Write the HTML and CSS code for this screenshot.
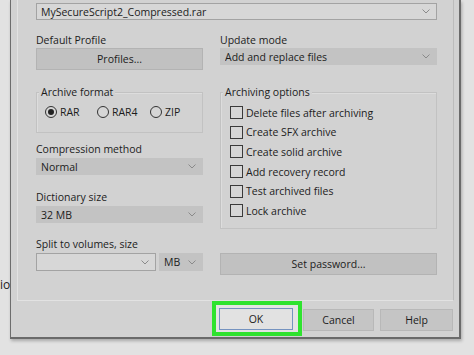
FILE: index.html
```html
<!DOCTYPE html>
<html>
<head>
<meta charset="utf-8">
<link rel="stylesheet" href="styles.css">
</head>
<body>
<div class="desk">
  <div class="bgtext">ios</div>
  <div class="dialog">
    <div class="page">
      <div class="combo wide plain">
        <span class="val">MySecureScript2_Compressed.rar</span>
        <svg class="chev" viewBox="0 0 8 5"><path d="M0.5 0.5 L4 4 L7.5 0.5"/></svg>
      </div>
      <div class="cols">
        <div class="col left">
          <div class="label first">Default Profile</div>
          <div class="btn profiles">Profiles...</div>
          <div class="group fmt">
            <span class="legend">Archive format</span>
            <div class="radios">
              <span class="radio on"><i></i>RAR</span>
              <span class="radio"><i></i>RAR4</span>
              <span class="radio"><i></i>ZIP</span>
            </div>
          </div>
          <div class="label comp">Compression method</div>
          <div class="combo filled"><span class="val">Normal</span><svg class="chev" viewBox="0 0 8 5"><path d="M0.5 0.5 L4 4 L7.5 0.5"/></svg></div>
          <div class="label dict">Dictionary size</div>
          <div class="combo filled"><span class="val">32 MB</span><svg class="chev" viewBox="0 0 8 5"><path d="M0.5 0.5 L4 4 L7.5 0.5"/></svg></div>
          <div class="label splitlbl">Split to volumes, size</div>
          <div class="split">
            <div class="combo plain vol"><span class="val"></span><svg class="chev" viewBox="0 0 8 5"><path d="M0.5 0.5 L4 4 L7.5 0.5"/></svg></div>
            <div class="combo filled unit"><span class="val">MB</span><svg class="chev" viewBox="0 0 8 5"><path d="M0.5 0.5 L4 4 L7.5 0.5"/></svg></div>
          </div>
        </div>
        <div class="col right">
          <div class="label first">Update mode</div>
          <div class="combo filled"><span class="val">Add and replace files</span><svg class="chev" viewBox="0 0 8 5"><path d="M0.5 0.5 L4 4 L7.5 0.5"/></svg></div>
          <div class="group opts">
            <span class="legend">Archiving options</span>
            <div class="check"><i></i>Delete files after archiving</div>
            <div class="check"><i></i>Create SFX archive</div>
            <div class="check"><i></i>Create solid archive</div>
            <div class="check"><i></i>Add recovery record</div>
            <div class="check"><i></i>Test archived files</div>
            <div class="check"><i></i>Lock archive</div>
          </div>
          <div class="btn password">Set password...</div>
        </div>
      </div>
    </div>
    <div class="buttons">
      <div class="okwrap"><div class="btn ok">OK</div></div>
      <div class="btn act cancel">Cancel</div>
      <div class="btn act help">Help</div>
    </div>
  </div>
</div>
</body>
</html>
```
FILE: styles.css
```css
* { box-sizing: border-box; }
html, body { margin: 0; padding: 0; }
body {
  width: 474px; height: 355px; overflow: hidden;
  background: #e2e2e2;
  font-family: "Open Sans", "Noto Sans", sans-serif;
  font-size: 10.5px;
  color: #1c1c1c;
}
.desk { position: relative; width: 474px; height: 355px; }
.bgtext {
  position: absolute; left: 0; top: 276px;
  font-size: 12px; color: #222;
}
.dialog {
  position: absolute; left: 10px; top: 0;
  width: 451px; height: 339px;
  background: #d2d2d2;
  border-left: 1px solid #6d6d6d;
  border-right: 2px solid #6a6a6a;
  border-bottom: 2px solid #6a6a6a;
  box-shadow: 1px 2px 3px rgba(0,0,0,0.25);
  display: flex; flex-direction: column;
}
.page {
  margin-left: 6px; width: 437px; height: 301px; flex: none;
  border-left: 1px solid #e2e2e2;
  border-right: 1px solid #bcbcbc;
  border-bottom: 1px solid #e2e2e2;
  padding: 3px 0 0 18px;
}
.combo {
  height: 17px; display: flex; align-items: center;
  padding: 0 6px 0 4px; line-height: 14px;
}
.combo .val { flex: 1; white-space: nowrap; overflow: hidden; }
.chev { width: 8px; height: 5px; fill: none; stroke: #8a8a8a; stroke-width: 1; flex: none; }
.plain { background: #d7d7d7; border: 1px solid #a3a3a3; }
.filled { background: #c3c3c3; border: 1px solid #c3c3c3; }
.wide { width: 401px; }
.cols { display: flex; gap: 17px; }
.col { display: flex; flex-direction: column; }
.left { width: 167px; }
.right { width: 217px; }
.label { height: 14px; line-height: 14px; margin-bottom: 1px; white-space: nowrap; }
.label.first { margin-top: 13px; }
.label.comp { margin-top: 9px; margin-bottom: 2px; }
.label.dict { margin-top: 15px; margin-bottom: 2px; }
.label.splitlbl { margin-top: 14px; margin-bottom: 2px; }
.btn {
  display: flex; align-items: center; justify-content: center;
  background: #c1c1c1; border: 1px solid #b3b3b3; line-height: 14px;
}
.profiles { height: 22px; }
.group {
  border: 1px solid #c2c2c2;
  box-shadow: inset 1px 1px 0 #dddddd;
  position: relative;
}
.group .legend {
  position: absolute; left: 2px; top: -8px; padding: 0 2px;
  line-height: 14px; height: 14px; background: #d2d2d2; white-space: nowrap;
}
.fmt { margin-top: 22px; height: 41px; }
.fmt .radios { display: flex; padding: 12px 0 0 8px; }
.radio { display: flex; align-items: center; width: 53px; white-space: nowrap; line-height: 14px; }
.radio:nth-child(2) { width: 54px; }
.radio i {
  width: 12px; height: 12px; border-radius: 50%; border: 1px solid #333;
  margin-right: 3px; position: relative; background: #d6d6d6;
}
.radio.on i::after {
  content: ""; position: absolute; left: 2px; top: 2px; width: 6px; height: 6px;
  border-radius: 50%; background: #222;
}
.opts { margin-top: 27px; height: 137px; padding: 10px 0 0 9px; }
.check { display: flex; align-items: center; height: 19.6px; white-space: nowrap; line-height: 14px; }
.check i {
  width: 13px; height: 13px; border: 1px solid #3a3a3a; margin-right: 3px; background: #d6d6d6; flex: none;
}
.split { display: flex; gap: 3px; }
.vol { width: 120px; height: 18px; justify-content: flex-end; }
.unit { width: 44px; height: 18px; }
.password { margin-top: 24px; height: 22px; }
.buttons {
  display: flex; align-items: flex-start; justify-content: flex-end;
  padding: 0 6px 0 0;
}
.okwrap {
  border: 4px solid #2fe32f;
  width: 90px; height: 35px;
  padding: 3px 0 0 3px; background: #e4e4e4;
}
.ok {
  width: 74px; height: 22px; background: #e2e2e2; border: 1px solid #7593c0;
}
.act { height: 22px; margin-top: 8px; background: #c5c5c5; border: 1px solid #b8b8b8; }
.cancel { width: 71px; margin-left: 1px; }
.help { width: 73px; margin-left: 6px; }
```
